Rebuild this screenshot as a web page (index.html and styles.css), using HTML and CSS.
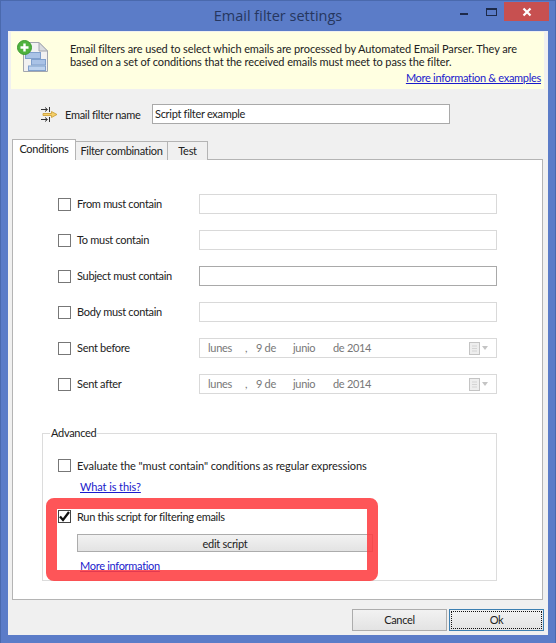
FILE: index.html
```html
<!DOCTYPE html>
<html>
<head>
	<meta charset="utf-8">
	<meta name="viewport" content="width=device-width, initial-scale=1">
	<title>Email filter settings</title>
	<link rel="stylesheet" href="styles.css">
</head>
<body>
<div class="window">
	<div class="titlebar">
		<div></div>
		<div class="title">Email filter settings</div>
		<div class="controls">
			<span class="ctl_min"></span>
			<span class="ctl_max"></span>
			<span class="ctl_close">
				<svg width="10" height="10" viewBox="0 0 10 10"><path d="M1.500 1.500l7 7M8.500 1.500l-7 7" stroke="#fff" stroke-width="2.200" fill="none"/></svg>
			</span>
		</div>
	</div>

	<div class="client">
		<div class="banner">
			<svg class="banner_icon" width="32" height="32" viewBox="0 0 32 32">
				<path d="M6.500 2.500H22L30.500 11V31.500H6.500Z" fill="#f1f1f1" stroke="#a2a6ae"/>
				<path d="M22 2.500V11H30.500Z" fill="#d9dbe0" stroke="#a2a6ae"/>
				<rect x="8.500" y="12.500" width="15" height="6" fill="#a9c2e6" stroke="#7f9fcc"/>
				<rect x="14.500" y="19.500" width="14" height="5.500" fill="#a9c2e6" stroke="#7f9fcc"/>
				<rect x="11.500" y="26" width="17" height="4.500" fill="#bdd2ee" stroke="#7f9fcc"/>
				<circle cx="7.500" cy="7.500" r="7" fill="#4fb23e" stroke="#3b9a2d"/>
				<path d="M7.500 3.500v8M3.500 7.500h8" stroke="#fff" stroke-width="2.400"/>
			</svg>
			<div class="banner_text">
				<p>Email filters are used to select which emails are processed by Automated Email Parser. They are based on a set of conditions that the received emails must meet to pass the filter.</p>
				<a class="link banner_link" href="#">More information &amp; examples</a>
			</div>
		</div>

		<div class="name_row">
			<svg class="name_icon" width="17" height="17" viewBox="0 0 17 17">
				<path d="M0 3.500h6M4 1.500l2.500 2-2.500 2M0 13.500h6M4 11.500l2.500 2-2.500 2M8.500 1v5M8.500 11v5" stroke="#333" fill="none"/>
				<path d="M2 7.500h8.500V5.500L16 8.500l-5.500 3V9.500H2Z" fill="#f4cf6a" stroke="#c99a2e" stroke-width=".8"/>
			</svg>
			<label class="name_label">Email filter name</label>
			<div class="textbox name_box">Script filter example</div>
		</div>

		<div class="tabs">
			<div class="tab active">Conditions</div>
			<div class="tab tab_filter">Filter combination</div>
			<div class="tab tab_test">Test</div>
		</div>

		<div class="panel">
			<div class="rows">
				<div class="row">
					<span class="check"></span><span class="row_label">From must contain</span>
					<div class="textbox off"></div>
				</div>
				<div class="row">
					<span class="check"></span><span class="row_label">To must contain</span>
					<div class="textbox off"></div>
				</div>
				<div class="row">
					<span class="check"></span><span class="row_label">Subject must contain</span>
					<div class="textbox"></div>
				</div>
				<div class="row">
					<span class="check"></span><span class="row_label">Body must contain</span>
					<div class="textbox off"></div>
				</div>
				<div class="row">
					<span class="check"></span><span class="row_label">Sent before</span>
					<div class="textbox off datebox">
						<span class="d1">lunes</span><span class="d2">,</span><span class="d3">9 de</span><span class="d4">junio</span><span class="d5">de 2014</span>
						<svg class="cal" width="20" height="13" viewBox="0 0 20 13">
							<rect x="1.500" y=".5" width="10" height="12" fill="#eee" stroke="#c4c4c4"/>
							<path d="M4 4h5M4 6.500h5M4 9h5" stroke="#d4d4d4"/>
							<path d="M14 4h6l-3 4Z" fill="#c4c4c4"/>
						</svg>
					</div>
				</div>
				<div class="row">
					<span class="check"></span><span class="row_label">Sent after</span>
					<div class="textbox off datebox">
						<span class="d1">lunes</span><span class="d2">,</span><span class="d3">9 de</span><span class="d4">junio</span><span class="d5">de 2014</span>
						<svg class="cal" width="20" height="13" viewBox="0 0 20 13">
							<rect x="1.500" y=".5" width="10" height="12" fill="#eee" stroke="#c4c4c4"/>
							<path d="M4 4h5M4 6.500h5M4 9h5" stroke="#d4d4d4"/>
							<path d="M14 4h6l-3 4Z" fill="#c4c4c4"/>
						</svg>
					</div>
				</div>
			</div>

			<fieldset class="advanced">
				<legend>Advanced</legend>
				<div class="adv_row eval_row">
					<span class="check"></span><span>Evaluate the "must contain" conditions as regular expressions</span>
				</div>
				<a class="link adv_link" href="#">What is this?</a>
				<div class="adv_row run_row">
					<span class="check on">
						<svg width="11" height="11" viewBox="0 0 11 11"><path d="M1 5.500l3 3.500 6-8" stroke="#111" stroke-width="2.300" fill="none"/></svg>
					</span><span>Run this script for filtering emails</span>
				</div>
				<div class="script_btn">edit script</div>
				<a class="link more_link" href="#">More information</a>
				<div class="highlight"></div>
			</fieldset>
		</div>

		<div class="footer">
			<div class="btn">Cancel</div>
			<div class="btn default"><span>Ok</span></div>
		</div>
	</div>
</div>
</body>
</html>
```

FILE: styles.css
```css
*{
	padding: 0px;
	margin: 0px;
	box-sizing: border-box;
}
body{
	font-family: Lato, "Liberation Sans", sans-serif;
	font-size: 11px;
	letter-spacing: -.3px;
	color: #222;
	background-color: #5b7cc8;
}
.window{
	height: 643px;
	width: 556px;
	display: flex;
	flex-direction: column;
	background-color: #5b7cc8;
	border: 1px solid #4a69ad;
	border-bottom: 0;
}
.titlebar{
	height: 30px;
	display: grid;
	grid-template-columns: 1fr auto 1fr;
}
.title{
	font-family: "Open Sans", sans-serif;
	font-size: 14.5px;
	letter-spacing: 0;
	color: #26375f;
	line-height: 30px;
}
.controls{
	display: flex;
	justify-content: flex-end;
	align-items: flex-start;
	padding-right: 6px;
}
.ctl_min{
	width: 8px;
	height: 2px;
	background-color: #1d2a4a;
	margin: 12px 18px 0 0;
}
.ctl_max{
	width: 11px;
	height: 8px;
	border: 1px solid #1d2a4a;
	border-top-width: 2px;
	margin: 7px 7px 0 0;
}
.ctl_close{
	width: 45px;
	height: 19px;
	margin-top: 1px;
	background-color: #c75050;
	display: flex;
	align-items: center;
	justify-content: center;
}
.client{
	flex: 1;
	margin: 0 7px 8px;
	background-color: #f0f0f0;
	display: flex;
	flex-direction: column;
}
.banner{
	height: 57px;
	margin: 1px 4px 0 3px;
	background-color: #ffffe1;
	display: flex;
	padding: 8px 3px 0 6px;
}
.banner_text{
	flex: 1;
	margin-left: 21px;
	padding-top: 2px;
	display: flex;
	flex-direction: column;
	line-height: 13px;
}
.banner_text p{
	letter-spacing: -.1px;
}
.banner_link{
	align-self: flex-end;
	margin-top: 3px;
}
.link{
	color: #1a1acc;
	text-decoration: underline;
}
.name_row{
	display: flex;
	align-items: center;
	margin-top: 15px;
	padding-left: 33px;
}
.name_label{
	margin-left: 7px;
	width: 87px;
}
.textbox{
	height: 20px;
	width: 298px;
	background-color: #fff;
	border: 1px solid #a9a9a9;
	line-height: 18px;
	padding-left: 2px;
}
.tabs{
	display: flex;
	align-items: flex-end;
	margin: 15px 0 -1px 4px;
	position: relative;
}
.tab{
	height: 19px;
	line-height: 18px;
	text-align: center;
	background-color: #f0f0f0;
	border: 1px solid #b4b4b4;
	border-left: 0;
	border-bottom: 0;
}
.tab.active{
	height: 21px;
	width: 64px;
	line-height: 18px;
	background-color: #fff;
	border-left: 1px solid #b4b4b4;
}
.tab_filter{
	width: 92px;
}
.tab_test{
	width: 40px;
}
.panel{
	height: 441px;
	margin: 0 5px 0 4px;
	background-color: #fff;
	border: 1px solid #b4b4b4;
	padding: 34px 45px 0 29px;
	display: flex;
	flex-direction: column;
}
.rows{
	display: flex;
	flex-direction: column;
	gap: 16px;
	padding-left: 16px;
}
.row{
	height: 20px;
	display: flex;
	align-items: center;
}
.row .textbox{
	margin-left: auto;
}
.row_label{
	margin-left: 6px;
	padding-bottom: 2px;
}
.check{
	width: 13px;
	height: 13px;
	flex: none;
	background-color: #fff;
	border: 1px solid #777;
	display: flex;
	align-items: center;
	justify-content: center;
}
.check.on{
	border-color: #444;
}
.textbox.off{
	border-color: #d9d9d9;
	color: #777;
}
.datebox{
	display: flex;
	align-items: center;
	padding-left: 0;
}
.d1{
	margin-left: 8px;
	width: 37px;
}
.d2{
	width: 11px;
}
.d3{
	width: 37px;
}
.d4{
	width: 40px;
}
.cal{
	margin-left: auto;
	margin-right: 8px;
}
.advanced{
	position: relative;
	margin-top: 32px;
	height: 155px;
	width: 455px;
	border: 1px solid #dcdcdc;
	padding: 0 0 0 15px;
}
.advanced legend{
	margin-left: -8px;
	padding: 0 1px;
	line-height: 14px;
}
.adv_row{
	display: flex;
	align-items: center;
	height: 16px;
	gap: 6px;
}
.eval_row{
	margin-top: 17px;
	letter-spacing: -.07px;
}
.adv_link{
	display: block;
	margin: 6px 0 0 22px;
	line-height: 15px;
	width: max-content;
	letter-spacing: -.1px;
}
.run_row{
	margin-top: 14px;
}
.script_btn{
	margin: 10px 0 0 19px;
	width: 296px;
	height: 18px;
	line-height: 17px;
	text-align: center;
	background: linear-gradient(#f2f2f2, #e3e3e3);
	border: 1px solid #acacac;
}
.more_link{
	display: block;
	margin: 6px 0 0 22px;
	line-height: 15px;
	width: max-content;
}
.highlight{
	position: absolute;
	left: 3px;
	top: 58px;
	width: 332px;
	height: 83px;
	border: 11px solid #fe3d41;
	border-radius: 8px;
	opacity: .88;
}
.footer{
	display: flex;
	justify-content: flex-end;
	gap: 2px;
	margin-top: 9px;
	padding-right: 4px;
}
.btn{
	width: 95px;
	height: 22px;
	line-height: 20px;
	text-align: center;
	background: linear-gradient(#f2f2f2, #e3e3e3);
	border: 1px solid #acacac;
}
.btn.default{
	border-color: #3c7fb1;
	padding: 1px;
	line-height: 16px;
}
.btn.default span{
	display: block;
	height: 18px;
	border: 1px dotted #111;
}
```
